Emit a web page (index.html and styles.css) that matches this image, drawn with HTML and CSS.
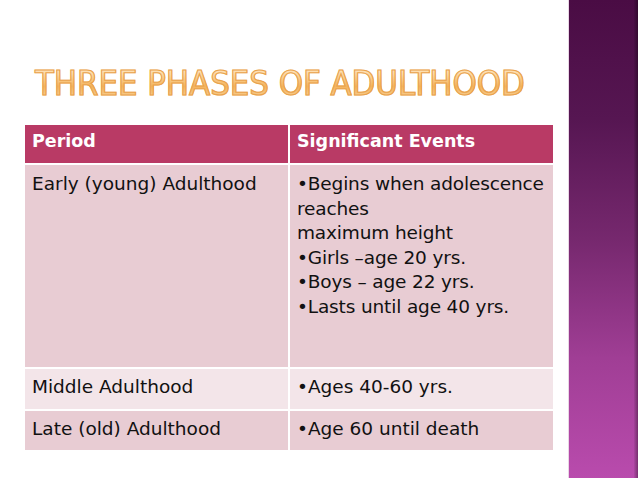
FILE: index.html
```html
<!DOCTYPE html>
<html lang="en">
<head>
<meta charset="utf-8">
<title>Three Phases of Adulthood</title>
<link rel="stylesheet" href="styles.css">
</head>
<body>
<div class="slide">
  <main class="content">
    <h1 class="title">THREE PHASES OF ADULTHOOD</h1>
    <table class="phases">
      <colgroup><col class="c1"><col class="c2"></colgroup>
      <thead>
        <tr><th>Period</th><th>Significant Events</th></tr>
      </thead>
      <tbody>
        <tr class="r-tall odd">
          <td>Early (young) Adulthood</td>
          <td class="events">•Begins when adolescence<br>reaches<br>maximum height<br>•Girls –age 20 yrs.<br>•Boys – age 22 yrs.<br>•Lasts until age 40 yrs.</td>
        </tr>
        <tr class="even">
          <td>Middle Adulthood</td>
          <td>•Ages 40-60 yrs.</td>
        </tr>
        <tr class="odd">
          <td>Late (old) Adulthood</td>
          <td>•Age 60 until death</td>
        </tr>
      </tbody>
    </table>
  </main>
  <aside class="sidebar"><div class="edge"></div></aside>
</div>
</body>
</html>
```
FILE: styles.css
```css
html, body {
  margin: 0;
  padding: 0;
  background: #ffffff;
}
.slide {
  width: 638px;
  height: 478px;
  display: flex;
  overflow: hidden;
  font-family: "DejaVu Sans", sans-serif;
}
.content {
  width: 568px;
  padding: 62px 0 0 23px;
  box-sizing: border-box;
}
.title {
  margin: 0 0 19px 12px;
  font-family: "DejaVu Sans Condensed", "DejaVu Sans", sans-serif;
  font-size: 34.3px;
  line-height: 42px;
  font-weight: normal;
  letter-spacing: 0;
  white-space: nowrap;
  color: transparent;
  background: linear-gradient(to bottom, #fff1dc 0%, #fcd9a4 30%, #f4b35c 58%, #f7cc8e 82%, #fde8c8 100%);
  -webkit-background-clip: text;
  background-clip: text;
  -webkit-text-stroke: 1.1px #e9a24c;
}
.phases {
  width: 532px;
  table-layout: fixed;
  border-collapse: collapse;
  font-size: 18.5px;
  color: #111111;
}
.phases col.c1 { width: 265px; }
.phases th, .phases td {
  text-align: left;
  vertical-align: top;
  padding: 6px 4px 8px 7px;
  line-height: 24.5px;
  border: 2px solid #ffffff;
  white-space: nowrap;
}
.phases th {
  background: #b93a65;
  color: #ffffff;
  font-weight: bold;
  font-size: 17.5px;
  height: 26px;
  padding-top: 4px;
}
.phases td.events { letter-spacing: -0.15px; }
.phases tr.odd td { background: #e8ccd3; }
.phases tr.even td { background: #f3e5e9; }
.phases tr.r-tall td { height: 187px; padding-top: 7px; }
.phases tbody tr:not(.r-tall) td { padding-top: 6px; padding-bottom: 9px; }
.sidebar {
  position: relative;
  width: 70px;
  height: 478px;
  background: linear-gradient(to bottom, #4a0c44 0%, #561652 25%, #76286e 50%, #a03e95 75%, #b94bad 100%);
  border-left: 1px solid #e9d6e6;
  box-sizing: border-box;
}
.edge {
  position: absolute;
  right: 0;
  top: 0;
  width: 4px;
  height: 100%;
  background: linear-gradient(to right, rgba(0,0,0,0.05), rgba(0,0,0,0.35));
}
```
